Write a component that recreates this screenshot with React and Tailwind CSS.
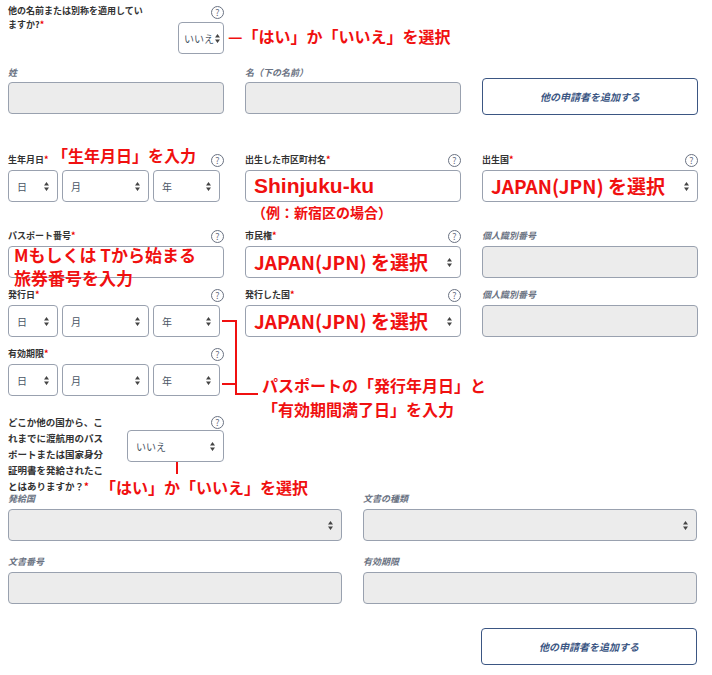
import React from "react";

const Help = ({ className = "" }) => (
  <span className={"flex h-[13px] w-[13px] items-center justify-center rounded-full border border-gray-500 text-[9px] leading-none text-gray-500 " + className}>?</span>
);

const Arrows = () => (
  <svg width="5" height="9" viewBox="0 0 5 9" className="shrink-0">
    <path d="M2.5 0L5 3.5H0z M2.5 9L0 5.5H5z" fill="#444" />
  </svg>
);

const Select = ({ text, className = "", big }) => (
  <div className={"flex h-[32px] items-center justify-between rounded border border-gray-400 bg-white pl-2 pr-2 " + className}>
    <span className={big ? "text-[19px] font-bold text-[#f01010] whitespace-nowrap" : "text-[10px] text-gray-600"}>{text}</span>
    <Arrows />
  </div>
);

const Input = ({ className = "", children }) => (
  <div className={"h-[32px] rounded border border-gray-400 bg-[#ececec] " + className}>{children}</div>
);

const Label = ({ text, req, italic, help }) => (
  <div className="flex h-[14px] items-center justify-between">
    <span className={"text-[9px] font-semibold " + (italic ? "italic text-gray-500" : "text-[#333]")}>
      {text}
      {req && <span className="text-[#e00]">*</span>}
    </span>
    {help && <Help />}
  </div>
);

const DateRow = () => (
  <div className="mt-[3px] flex gap-[4px]">
    <Select text="日" className="w-[50px]" />
    <Select text="月" className="w-[87px]" />
    <Select text="年" className="w-[67px]" />
  </div>
);

const red = "absolute font-bold text-[#f01010] whitespace-nowrap";

export default function App() {
  return (
    <div className="relative h-[675px] w-[712px] bg-white px-2" style={{ fontFamily: '"Noto Sans CJK JP", "Noto Sans", sans-serif' }}>
      <div className="grid grid-cols-[216px_216px_216px] gap-x-[21px]">
        <div className="relative h-[60px] pt-[4px]">
          <div className="w-[138px] text-[9px] font-semibold leading-[14px] text-[#333]">
            他の名前または別称を適用していますか?<span className="text-[#e00]">*</span>
          </div>
          <Help className="absolute right-0 top-[6px]" />
          <Select text="いいえ" className="absolute right-0 top-[22px] w-[46px] pl-[5px] pr-[3px]" />
        </div>
        <div />
        <div />

        <div className="pt-[6px]">
          <Label text="姓" italic />
          <Input className="mt-[2px]" />
        </div>
        <div className="pt-[6px]">
          <Label text="名（下の名前）" italic />
          <Input className="mt-[2px]" />
        </div>
        <div className="pt-[18px]">
          <div className="flex h-[37px] items-center justify-center rounded border border-[#3b5683] text-[10px] font-semibold italic text-[#3b5683]">
            他の申請者を追加する
          </div>
        </div>

        <div className="mt-[38px]">
          <Label text="生年月日" req help />
          <DateRow />
        </div>
        <div className="mt-[38px]">
          <Label text="出生した市区町村名" req help />
          <div className="mt-[3px] flex h-[32px] items-center rounded border border-gray-400 bg-white px-2 text-[21px] font-bold text-[#f01010]" style={{ fontFamily: '"Liberation Sans", "Noto Sans CJK JP", sans-serif' }}>
            Shinjuku-ku
          </div>
        </div>
        <div className="mt-[38px]">
          <Label text="出生国" req help />
          <Select text="JAPAN(JPN) を選択" big className="mt-[3px]" />
        </div>

        <div className="mt-[27px]">
          <Label text="パスポート番号" req help />
          <div className="mt-[3px] h-[32px] rounded border border-gray-400 bg-white" />
        </div>
        <div className="mt-[27px]">
          <Label text="市民権" req help />
          <Select text="JAPAN(JPN) を選択" big className="mt-[3px]" />
        </div>
        <div className="mt-[27px]">
          <Label text="個人識別番号" italic />
          <Input className="mt-[3px]" />
        </div>

        <div className="mt-[10px]">
          <Label text="発行日" req help />
          <DateRow />
        </div>
        <div className="mt-[10px]">
          <Label text="発行した国" req help />
          <Select text="JAPAN(JPN) を選択" big className="mt-[3px]" />
        </div>
        <div className="mt-[10px]">
          <Label text="個人識別番号" italic />
          <Input className="mt-[3px]" />
        </div>

        <div className="mt-[10px]">
          <Label text="有効期限" req help />
          <DateRow />
        </div>
        <div />
        <div />

        <div className="relative mt-[18px] h-[78px]">
          <div className="w-[102px] text-[9.5px] font-semibold leading-[16px] text-[#333]">
            どこか他の国から、これまでに渡航用のパスポートまたは国家身分証明書を発給されたことはありますか？<span className="text-[#e00]">*</span>
          </div>
          <Help className="absolute right-0 top-[2px]" />
          <Select text="いいえ" className="absolute right-0 top-[16px] w-[97px]" />
        </div>
        <div />
        <div />
      </div>

      <div className="grid grid-cols-[334px_334px] gap-x-[21px]">
        <div className="mt-[0px]">
          <Label text="発給国" italic />
          <div className="mt-[3px] flex h-[32px] items-center justify-end rounded border border-gray-400 bg-[#ececec] pr-2"><Arrows /></div>
        </div>
        <div className="mt-[0px]">
          <Label text="文書の種類" italic />
          <div className="mt-[3px] flex h-[32px] items-center justify-end rounded border border-gray-400 bg-[#ececec] pr-2"><Arrows /></div>
        </div>
        <div className="mt-[14px]">
          <Label text="文書番号" italic />
          <Input className="mt-[3px]" />
        </div>
        <div className="mt-[14px]">
          <Label text="有効期限" italic />
          <Input className="mt-[3px]" />
        </div>
      </div>
      <div className="mt-[24px] flex justify-end pr-[7px]">
        <div className="flex h-[37px] w-[216px] items-center justify-center rounded border border-[#3b5683] text-[10px] font-semibold italic text-[#3b5683]">
          他の申請者を追加する
        </div>
      </div>

      {/* annotations */}
      <div className={red + " left-[228px] top-[24px] text-[16px]"}>—「はい」か「いいえ」を選択</div>
      <div className={red + " left-[52px] top-[143px] text-[16px]"}>「生年月日」を入力</div>
      <div className={red + " left-[252px] top-[202px] text-[14px]"}>（例：新宿区の場合）</div>
      <div className={red + " left-[14px] top-[243px] text-[17px] leading-[23px]"}>Mもしくは Tから始まる<br />旅券番号を入力</div>
      <div className="absolute left-[222px] top-[320px] h-[75px] w-[15px] border-r-2 border-[#f01010]" />
      <div className="absolute left-[222px] top-[320px] h-[2px] w-[15px] bg-[#f01010]" />
      <div className="absolute left-[222px] top-[383px] h-[2px] w-[15px] bg-[#f01010]" />
      <div className="absolute left-[236px] top-[393px] h-[2px] w-[22px] bg-[#f01010]" />
      <div className={red + " left-[262px] top-[373px] text-[16px] leading-[24px]"}>パスポートの「発行年月日」と<br />「有効期間満了日」を入力</div>
      <div className="absolute left-[176px] top-[462px] h-[12px] w-[2px] bg-[#f01010]" />
      <div className={red + " left-[100px] top-[475px] text-[16px]"}>「はい」か「いいえ」を選択</div>
    </div>
  );
}
